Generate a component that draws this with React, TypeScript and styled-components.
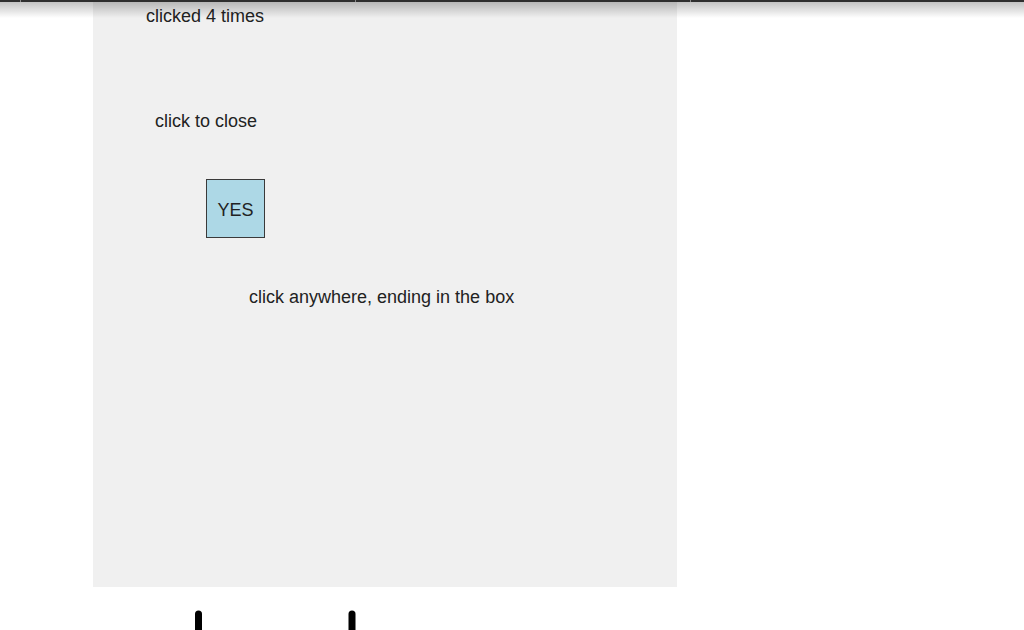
import React from "react";
import styled, { createGlobalStyle } from "styled-components";

const Global = createGlobalStyle`
  html, body { margin: 0; padding: 0; background: #ffffff; }
  body { font-family: "Liberation Sans", Arial, sans-serif; overflow: hidden; }
`;

const Page = styled.div`
  position: relative;
  width: 1024px;
  height: 630px;
  overflow: hidden;
  padding-left: 93px;
  box-sizing: border-box;
`;

const TopEdge = styled.div`
  position: absolute;
  left: 0;
  top: 0;
  width: 100%;
  height: 18px;
  pointer-events: none;
  z-index: 2;
  background: linear-gradient(
    to bottom,
    #2e2e2e 0,
    #2e2e2e 2px,
    rgba(0, 0, 0, 0.24) 2px,
    rgba(0, 0, 0, 0) 18px
  );
`;

const Tick = styled.span<{ $x: number }>`
  position: absolute;
  top: 0;
  left: ${(p) => p.$x}px;
  width: 1px;
  height: 2px;
  background: #8a8a8a;
`;

const Panel = styled.div`
  width: 584px;
  height: 587px;
  background: #f0f0f0;
  display: flex;
  flex-direction: column;
  align-items: flex-start;
  padding-top: 6px;
  box-sizing: border-box;
`;

const Label = styled.div<{ $indent: number; $gap: number }>`
  margin-left: ${(p) => p.$indent}px;
  margin-top: ${(p) => p.$gap}px;
  font-size: 18px;
  line-height: 21px;
  color: #222222;
  white-space: nowrap;
`;

const YesBox = styled.div<{ $indent: number; $gap: number }>`
  margin-left: ${(p) => p.$indent}px;
  margin-top: ${(p) => p.$gap}px;
  width: 59px;
  height: 59px;
  box-sizing: border-box;
  border: 1px solid #3a3a3a;
  background: #add8e6;
  display: flex;
  align-items: center;
  justify-content: center;
  padding-top: 3px;
  font-size: 18px;
  line-height: 21px;
  color: #222222;
`;

const Bars = styled.svg`
  display: block;
  width: 584px;
  height: 43px;
`;

export default function App() {
  return (
    <Page>
      <Global />
      <TopEdge>
        <Tick $x={20} />
        <Tick $x={355} />
        <Tick $x={690} />
      </TopEdge>
      <Panel>
        <Label $indent={53} $gap={0}>clicked 4 times</Label>
        <Label $indent={62} $gap={84}>click to close</Label>
        <YesBox $indent={113} $gap={47}>YES</YesBox>
        <Label $indent={156} $gap={49}>click anywhere, ending in the box</Label>
      </Panel>
      <Bars viewBox="0 0 584 43">
        <line x1="105.5" y1="27" x2="105.5" y2="60" stroke="#000" strokeWidth="7" strokeLinecap="round" />
        <line x1="259" y1="27" x2="259" y2="60" stroke="#000" strokeWidth="7" strokeLinecap="round" />
      </Bars>
    </Page>
  );
}
